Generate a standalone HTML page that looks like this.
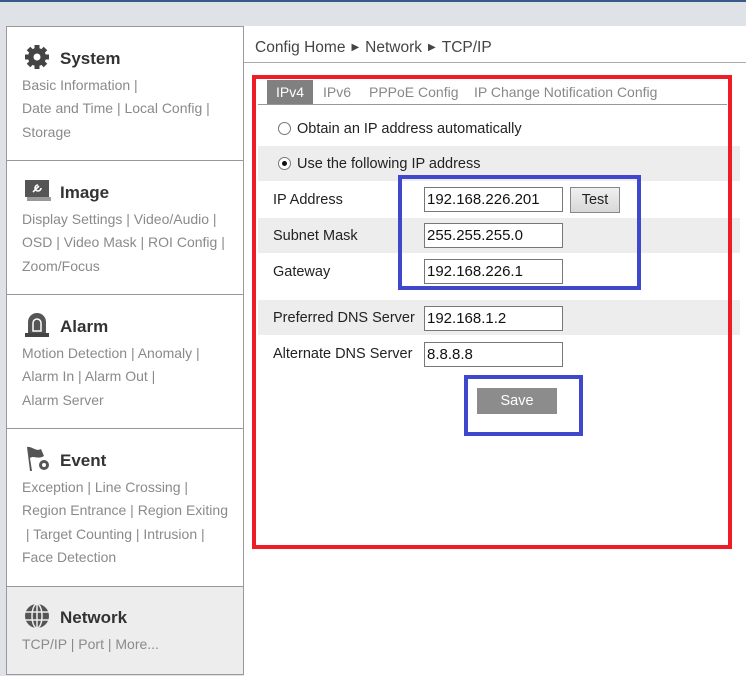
<!DOCTYPE html>
<html><head><meta charset="utf-8"><style>
*{margin:0;padding:0;box-sizing:border-box}
body{width:746px;height:676px;background:#dfe3e8;font-family:"Liberation Sans",sans-serif;position:relative;overflow:hidden}
.topline{position:absolute;left:0;top:0;width:746px;height:2px;background:#3a5a8a}
.side{position:absolute;left:6px;top:26px;width:238px;height:649px;background:#fff;border:1px solid #999}
.sec{position:absolute;left:0;width:236px;border-bottom:1px solid #999}
.sec h2{position:absolute;left:53px;font-size:17px;font-weight:bold;color:#333}
.sec .ic{position:absolute;left:17px}
.sec .l{position:absolute;left:15px;font-size:14px;color:#8a8a8a;line-height:23.3px;white-space:nowrap}
.main{position:absolute;left:244px;top:26px;width:502px;height:650px;background:#fff}
.bc{position:absolute;left:11px;top:13px;font-size:15.5px;color:#444}
.bc span{font-size:10px;margin:0 6px;position:relative;top:-2px}
.hr{position:absolute;left:0;top:36px;width:502px;height:1px;background:#aaa}
.red{position:absolute;left:252px;top:75px;width:480px;height:474px;border:4px solid #ee1c25}
.tabs{position:absolute;left:267px;top:80px;height:25px;font-size:14px;color:#888}
.tabs div{position:absolute;top:0;height:25px;line-height:25px;white-space:nowrap}
.tabline{position:absolute;left:258px;top:104px;width:469px;height:1px;background:#999}
.row{position:absolute;left:258px;width:482px;height:35px;font-size:14.5px;color:#222;line-height:35px}
.g{background:#ededed}
.row .lab{position:absolute;left:15px;top:1px}
.inp{position:absolute;left:424px;width:139px;height:25px;border:1px solid #777;background:#fff;font-size:15px;line-height:23px;padding-left:2px;color:#111}
.blue{position:absolute;border:4px solid #3f48cc}
.radio{position:absolute;left:20px;top:11px;width:13px;height:13px;border:1px solid #777;border-radius:50%;background:#fff}
</style></head><body>
<div class="topline"></div>
<div class="main">
 <div class="bc">Config Home<span>▶</span>Network<span>▶</span>TCP/IP</div>
 <div class="hr"></div>
</div>
<div class="side">
 <div class="sec" style="top:0;height:134px">
  <svg class="ic" style="top:17px" width="26" height="26" viewBox="0 0 26 26"><g fill="#444"><circle cx="13" cy="13" r="9"/><rect x="10.5" y="1" width="5" height="24"/><rect x="1" y="10.5" width="24" height="5"/><rect x="10.5" y="1" width="5" height="24" transform="rotate(45 13 13)"/><rect x="10.5" y="1" width="5" height="24" transform="rotate(-45 13 13)"/></g><circle cx="13" cy="13" r="3.5" fill="#fff"/></svg>
  <h2 style="top:22px">System</h2>
  <div class="l" style="top:47px">Basic Information |<br>Date and Time | Local Config |<br>Storage</div>
 </div>
 <div class="sec" style="top:134px;height:134px">
  <svg class="ic" style="top:18px" width="27" height="24" viewBox="0 0 27 24"><rect x="1" y="1" width="24" height="17" fill="#555"/><rect x="3" y="18" width="24" height="4" fill="#999"/><path d="M9 13l6-6M14 6a3 3 0 1 0 3 3" stroke="#fff" stroke-width="1.6" fill="none"/></svg>
  <h2 style="top:22px">Image</h2>
  <div class="l" style="top:47px">Display Settings | Video/Audio |<br>OSD | Video Mask | ROI Config |<br>Zoom/Focus</div>
 </div>
 <div class="sec" style="top:268px;height:134px">
  <svg class="ic" style="top:17px" width="26" height="26" viewBox="0 0 26 26"><path d="M4 21V10a9 9 0 0 1 18 0v11z" fill="#555"/><rect x="1" y="21" width="24" height="4" fill="#444"/><path d="M9 19v-8a4 4 0 0 1 8 0v8z" fill="none" stroke="#fff" stroke-width="1.5"/></svg>
  <h2 style="top:22px">Alarm</h2>
  <div class="l" style="top:47px">Motion Detection | Anomaly |<br>Alarm In | Alarm Out |<br>Alarm Server</div>
 </div>
 <div class="sec" style="top:402px;height:158px">
  <svg class="ic" style="top:16px" width="28" height="28" viewBox="0 0 28 28"><path d="M3 2l3 24h2L6 13c4-3 8 2 14-2L17 4C12 7 8 1 3 2z" fill="#555"/><circle cx="20" cy="20" r="5" fill="#555"/><circle cx="20" cy="20" r="2" fill="#fff"/></svg>
  <h2 style="top:22px">Event</h2>
  <div class="l" style="top:47px">Exception | Line Crossing |<br>Region Entrance | Region Exiting<br>&nbsp;| Target Counting | Intrusion |<br>Face Detection</div>
 </div>
 <div class="sec" style="top:560px;height:88px;background:#ededed">
  <svg class="ic" style="top:16px" width="26" height="26" viewBox="0 0 26 26"><circle cx="13" cy="13" r="12" fill="#555"/><g stroke="#ededed" stroke-width="1.5" fill="none"><ellipse cx="13" cy="13" rx="5" ry="12"/><path d="M13 1v24M1 9h24M1 17h24"/></g></svg>
  <h2 style="top:21px">Network</h2>
  <div class="l" style="top:46px">TCP/IP | Port | More...</div>
 </div>
</div>
<div class="tabs">
 <div style="left:0;width:46px;background:#808080;color:#fff;text-align:center">IPv4</div>
 <div style="left:56px">IPv6</div>
 <div style="left:102px">PPPoE Config</div>
 <div style="left:207px">IP Change Notification Config</div>
</div>
<div class="tabline"></div>
<div class="row" style="top:111px"><div class="radio"></div><div class="lab" style="left:39px">Obtain an IP address automatically</div></div>
<div class="row g" style="top:146px"><div class="radio"><div style="position:absolute;left:3px;top:3px;width:5px;height:5px;border-radius:50%;background:#111"></div></div><div class="lab" style="left:39px">Use the following IP address</div></div>
<div class="row" style="top:182px"><div class="lab">IP Address</div></div>
<div class="row g" style="top:218px"><div class="lab">Subnet Mask</div></div>
<div class="row" style="top:254px"><div class="lab">Gateway</div></div>
<div class="row g" style="top:300px"><div class="lab">Preferred DNS Server</div></div>
<div class="row" style="top:336px"><div class="lab">Alternate DNS Server</div></div>
<div class="inp" style="top:187px">192.168.226.201</div>
<div style="position:absolute;left:570px;top:187px;width:50px;height:26px;border:1px solid #888;background:linear-gradient(#f0f0f0,#d8d8d8);font-size:14.5px;text-align:center;line-height:24px;color:#222">Test</div>
<div class="inp" style="top:223px">255.255.255.0</div>
<div class="inp" style="top:259px">192.168.226.1</div>
<div class="inp" style="top:306px">192.168.1.2</div>
<div class="inp" style="top:342px">8.8.8.8</div>
<div style="position:absolute;left:477px;top:388px;width:80px;height:26px;background:#8c8c8c;color:#fff;font-size:14.5px;text-align:center;line-height:26px">Save</div>
<div class="red"></div>
<div class="blue" style="left:398px;top:175px;width:243px;height:115px"></div>
<div class="blue" style="left:464px;top:375px;width:119px;height:61px"></div>
</body></html>
